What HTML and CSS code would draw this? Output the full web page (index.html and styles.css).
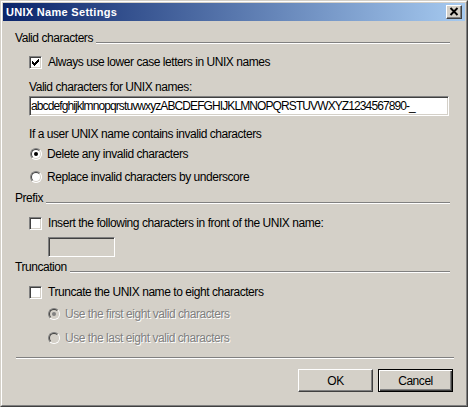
FILE: index.html
```html
<!DOCTYPE html>
<html>
<head>
<meta charset="utf-8">
<title>UNIX Name Settings</title>
<link rel="stylesheet" href="styles.css">
</head>
<body>
<div class="window">
  <div class="frame">
    <div class="titlebar">
      <span class="title">UNIX Name Settings</span>
      <span class="close">
        <svg width="14" height="12" viewBox="0 0 14 12"><path d="M3.5 2 L10.5 9 M10.5 2 L3.5 9" stroke="#000" stroke-width="1.9" fill="none"/></svg>
      </span>
    </div>
    <div class="content">
      <div class="ghead g-valid"><span>Valid characters</span><span class="rule"></span></div>
      <div class="row r-always">
        <span class="cb">
          <svg width="11" height="11" viewBox="0 0 11 11"><g fill="#000"><rect x="2" y="4" width="1" height="3"/><rect x="3" y="5" width="1" height="3"/><rect x="4" y="6" width="1" height="3"/><rect x="5" y="5" width="1" height="3"/><rect x="6" y="4" width="1" height="3"/><rect x="7" y="3" width="1" height="3"/><rect x="8" y="2" width="1" height="3"/></g></svg>
        </span>
        <span>Always use lower case letters in UNIX names</span>
      </div>
      <div class="row r-label">Valid characters for UNIX names:</div>
      <div class="textbox">abcdefghijklmnopqrstuvwxyzABCDEFGHIJKLMNOPQRSTUVWXYZ1234567890-_</div>
      <div class="row r-if">If a user UNIX name contains invalid characters</div>
      <div class="row r-delete"><span class="rb on"></span><span>Delete any invalid characters</span></div>
      <div class="row r-replace"><span class="rb"></span><span>Replace invalid characters by underscore</span></div>

      <div class="ghead g-prefix"><span>Prefix</span><span class="rule"></span></div>
      <div class="row r-insert"><span class="cb"></span><span>Insert the following characters in front of the UNIX name:</span></div>
      <div class="smallbox"></div>

      <div class="ghead g-trunc"><span>Truncation</span><span class="rule"></span></div>
      <div class="row r-truncate"><span class="cb"></span><span>Truncate the UNIX name to eight characters</span></div>
      <div class="row sub disabled r-first"><span class="rb on"></span><span>Use the first eight valid characters</span></div>
      <div class="row sub disabled r-last"><span class="rb"></span><span>Use the last eight valid characters</span></div>

      <div class="separator"></div>
      <div class="buttons">
        <button class="btn">OK</button>
        <button class="btn default">Cancel</button>
      </div>
    </div>
  </div>
</div>
</body>
</html>
```
FILE: styles.css
```css
* { box-sizing: border-box; }
html, body { margin: 0; padding: 0; }
body {
  width: 468px;
  height: 407px;
  overflow: hidden;
  background: #d4d0c8;
  font-family: "Liberation Sans", Arial, sans-serif;
  font-size: 12px;
  letter-spacing: -0.45px;
  color: #000;
}
.window {
  width: 468px;
  height: 407px;
  border: 1px solid;
  border-color: #d4d0c8 #404040 #404040 #d4d0c8;
  background: #d4d0c8;
}
.frame {
  height: 100%;
  border: 1px solid;
  border-color: #fff #808080 #808080 #fff;
  padding: 1px;
  display: flex;
  flex-direction: column;
}
.titlebar {
  height: 18px;
  flex: none;
  background: linear-gradient(to right, #0a246a, #a6caf0);
  display: flex;
  align-items: center;
  justify-content: space-between;
  padding: 0 3px 0 3px;
}
.title {
  color: #fff;
  font-weight: bold;
  font-size: 11px;
  letter-spacing: 0.3px;
  line-height: 18px;
}
.close {
  width: 16px;
  height: 14px;
  background: #d4d0c8;
  border: 1px solid;
  border-color: #fff #404040 #404040 #fff;
  box-shadow: inset -1px -1px #808080;
  display: flex;
}
.content {
  flex: 1;
  display: flex;
  flex-direction: column;
  padding: 0 15px 0 12px;
}
.ghead {
  display: flex;
  height: 14px;
  line-height: 14px;
  white-space: nowrap;
}
.ghead .rule {
  flex: 1;
  height: 2px;
  margin-top: 11px;
  margin-left: 3px;
  border-top: 1px solid #808080;
  border-bottom: 1px solid #fff;
}
.g-valid { margin-top: 10px; }
.g-prefix { margin-top: 7px; }
.g-trunc { margin-top: 3px; }

.row {
  display: flex;
  align-items: center;
  height: 14px;
  line-height: 14px;
  margin-left: 14px;
  white-space: nowrap;
}
.row.sub { margin-left: 33px; }
.r-always { margin-top: 10px; }
.r-label { margin-top: 11px; }
.r-if { margin-top: 11px; }
.r-delete { margin-top: 6px; }
.r-replace { margin-top: 9px; }
.r-insert { margin-top: 11px; }
.r-truncate { margin-top: 11px; }
.r-first { margin-top: 8px; }
.r-last { margin-top: 10px; }

.cb {
  flex: none;
  width: 13px;
  height: 13px;
  margin-right: 6px;
  background: #fff;
  border: 1px solid;
  border-color: #808080 #fff #fff #808080;
  box-shadow: inset 1px 1px #404040, inset -1px -1px #d4d0c8;
  display: flex;
}
.rb {
  flex: none;
  position: relative;
  width: 12px;
  height: 12px;
  margin-left: 1px;
  margin-right: 5px;
  border-radius: 50%;
  border: 1px solid;
  border-color: #808080 #fff #fff #808080;
  background: #fff;
}
.rb::before {
  content: "";
  position: absolute;
  left: 0; top: 0; right: 0; bottom: 0;
  border-radius: 50%;
  border: 1px solid;
  border-color: #404040 #d4d0c8 #d4d0c8 #404040;
}
.rb.on::after {
  content: "";
  position: absolute;
  left: 3px; top: 3px;
  width: 4px; height: 4px;
  border-radius: 50%;
  background: #000;
}
.sub .rb { margin-left: 0; }
.disabled { color: #808080; text-shadow: 1px 1px 0 #fff; }
.disabled .rb { background: #d4d0c8; }
.disabled .rb.on::after { background: #808080; }

.textbox {
  margin-top: 2px;
  margin-left: 14px;
  width: 420px;
  height: 20px;
  background: #fff;
  border: 1px solid;
  border-color: #808080 #fff #fff #808080;
  box-shadow: inset 1px 1px #404040, inset -1px -1px #d4d0c8;
  padding-left: 1px;
  line-height: 18px;
  letter-spacing: -0.9px;
  white-space: nowrap;
  overflow: hidden;
}
.smallbox {
  margin-top: 7px;
  margin-left: 33px;
  width: 67px;
  height: 20px;
  background: #d4d0c8;
  border: 1px solid;
  border-color: #808080 #fff #fff #808080;
  box-shadow: inset 1px 1px #404040, inset -1px -1px #d4d0c8;
}
.separator {
  margin-top: 12px;
  margin-left: 1px;
  margin-right: -4px;
  height: 2px;
  border-top: 1px solid #808080;
  border-bottom: 1px solid #fff;
}
.buttons {
  margin-top: 10px;
  margin-right: -3px;
  display: flex;
  justify-content: flex-end;
  gap: 5px;
}
.btn {
  width: 75px;
  height: 23px;
  padding: 0;
  font: inherit;
  letter-spacing: inherit;
  color: #000;
  background: #d4d0c8;
  border: 1px solid;
  border-color: #fff #404040 #404040 #fff;
  box-shadow: inset -1px -1px #808080;
}
.btn.default {
  border: 1px solid #000;
  box-shadow: inset 1px 1px #fff, inset -1px -1px #404040, inset -2px -2px #808080;
}
```
